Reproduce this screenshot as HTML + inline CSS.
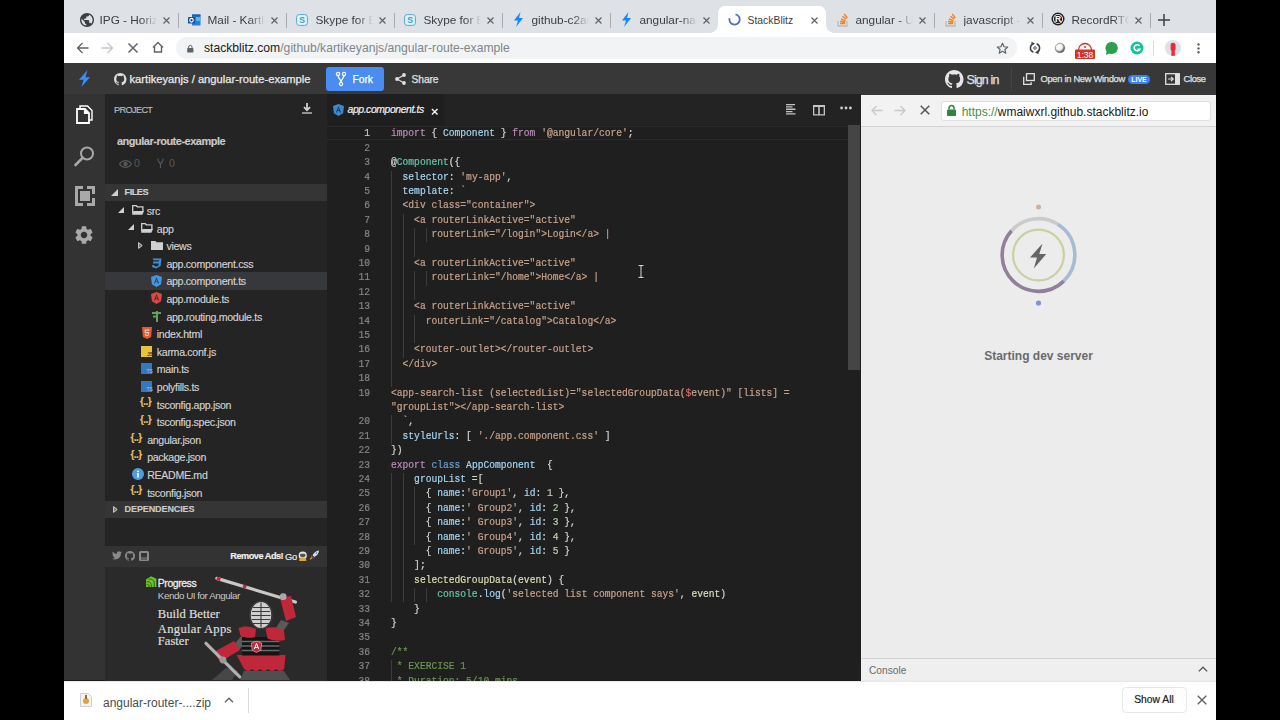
<!DOCTYPE html>
<html><head><meta charset="utf-8"><title>StackBlitz</title>
<style>
*{margin:0;padding:0;box-sizing:border-box}
html,body{width:1280px;height:720px;overflow:hidden;background:#000;font-family:"Liberation Sans",sans-serif}
#scr{position:absolute;left:64px;top:0;width:1152px;height:720px;overflow:hidden;background:#1e1e1e}
.a{position:absolute}
svg{position:absolute;overflow:visible}
#tabs{left:0;top:0;width:1152px;height:33px;background:#dee1e6}
.tab{position:absolute;top:6px;width:108px;height:27px;font-size:11.8px;color:#3c4043}
.tab.act{background:#fff;border-radius:7px 7px 0 0}
.tab.act:before,.tab.act:after{content:"";position:absolute;bottom:0;width:8px;height:8px;background:radial-gradient(circle at 0 0,transparent 7.5px,#fff 8px)}
.tab.act:before{left:-8px;background:radial-gradient(circle at 0 0,transparent 7.5px,#fff 8px)}
.tab.act:after{right:-8px;background:radial-gradient(circle at 100% 0,transparent 7.5px,#fff 8px)}
.tab .tt{position:absolute;left:29.5px;top:6.8px;width:57px;white-space:nowrap;overflow:hidden;-webkit-mask-image:linear-gradient(90deg,#000 72%,transparent 100%)}
.tab.act .tt{width:auto;-webkit-mask-image:none;font-size:10.3px;top:9.4px;letter-spacing:0.05px}
.tab .x{position:absolute;left:93px;top:10.5px;width:7px;height:7px}
.tsep{position:absolute;top:13px;width:1px;height:15px;background:#a8abb0}
#addr{left:0;top:33px;width:1152px;height:30px;background:#fff}
#omni{left:112px;top:37px;width:841px;height:22px;border-radius:11px;background:#f1f3f4}
#url{left:140px;top:41.3px;font-size:12.15px;color:#202124;white-space:nowrap;letter-spacing:0px}
#url span{color:#80868b}

#sbh{left:0;top:63px;width:1152px;height:31.5px;background:#383838}
.ht{position:absolute;color:#e0e0e0;white-space:nowrap}
#fork{left:262px;top:67px;width:57.5px;height:24px;background:#4a8cf0;border-radius:3px}

#act{left:0;top:94px;width:41px;height:586px;background:#333}

#side{left:41px;top:94px;width:222px;height:586px;background:#242424}
.st{position:absolute;white-space:nowrap;color:#d2d2d2;font-size:10.6px;letter-spacing:-0.3px;-webkit-text-stroke:0.15px}
.band{position:absolute;left:41px;width:222px;background:#333}

#edit{left:263px;top:94px;width:534px;height:586px;background:#1f1f1f}
#etabs{left:263px;top:94px;width:534px;height:31px;background:#232323}
#atab{left:263px;top:94px;width:118px;height:31px;background:#1f1f1f}
.cl{position:absolute;left:263px;width:520px;height:14.4px;font-family:"Liberation Mono",monospace;font-size:9.65px;line-height:14.4px;white-space:pre;color:#d4d4d4;transform:scaleY(1.15);-webkit-text-stroke:0.2px}
.ln{position:absolute;left:0;width:43px;text-align:right;color:#858585}
.cd{position:absolute;left:64px}
.k{color:#bb8ab8}.v{color:#a3d2ee}.s{color:#c6a08a}.t{color:#62c2a6}.b{color:#6a9ed0}.n{color:#b9cdb0}.f{color:#d9d9b0}.c{color:#6d9158}.r{color:#d16969}.e{color:#dadcbc}
.g{position:absolute;width:1px;background:#3c3c3c}

#prev{left:796.5px;top:94.5px;width:356px;height:586px;background:#ececec}
</style></head><body>
<div id="scr">
<div id="tabs" class="a">
<div class="tab" style="left:6px"><svg style="left:9.5px;top:7px" width="14" height="14" viewBox="2 2 20 20"><path d="M12 2C6.48 2 2 6.48 2 12s4.48 10 10 10 10-4.48 10-10S17.52 2 12 2zm-1 17.93c-3.95-.49-7-3.85-7-7.93 0-.62.08-1.21.21-1.790L9 15v1c0 1.1.9 2 2 2v1.93zm6.9-2.54c-.26-.81-1-1.390-1.9-1.39h-1v-3c0-.55-.45-1-1-1H8v-2h2c.55 0 1-.45 1-1V7h2c1.1 0 2-.9 2-2v-.41c2.93 1.19 5 4.06 5 7.41 0 2.08-.8 3.97-2.1 5.39z" fill="#3c4043"/></svg><span class="tt">IPG - Horizon</span><span class="x"><svg width="7" height="7" viewBox="0 0 7 7"><path d="M0.5 0.5L6.5 6.5M6.5 0.5L0.5 6.5" stroke="#5f6368" stroke-width="1.2" fill="none"/></svg></span></div>
<div class="tab" style="left:114px"><svg style="left:9.5px;top:7.5px" width="13" height="12" viewBox="0 0 13 12"><rect x="4" y="0.5" width="8.5" height="11" rx="0.6" fill="#2a7fd4"/><rect x="4" y="0.5" width="8.5" height="2" fill="#1d5fa8"/><rect x="8" y="3" width="4.5" height="4" fill="#56b8f0"/><rect x="0" y="3" width="7" height="6.5" rx="0.6" fill="#1d4fa0"/><ellipse cx="3.5" cy="6.25" rx="1.7" ry="1.9" fill="none" stroke="#fff" stroke-width="1.1"/></svg><span class="tt">Mail - Karthikeyan</span><span class="x"><svg width="7" height="7" viewBox="0 0 7 7"><path d="M0.5 0.5L6.5 6.5M6.5 0.5L0.5 6.5" stroke="#5f6368" stroke-width="1.2" fill="none"/></svg></span></div>
<div class="tab" style="left:222px"><svg style="left:10px;top:7.5px" width="12" height="12" viewBox="0 0 12 12"><path d="M3.2 0.6h5.6a2.6 2.6 0 0 1 2.6 2.6v5.6a2.6 2.6 0 0 1-2.6 2.6H3.2a2.6 2.6 0 0 1-2.6-2.6V3.2a2.6 2.6 0 0 1 2.6-2.6z" fill="#dff4fb" stroke="#5aa7c8" stroke-width="1"/><text x="6" y="9.3" font-family="Liberation Sans" font-size="8.6" font-weight="bold" fill="#3b9cc4" text-anchor="middle">S</text></svg><span class="tt">Skype for Business</span><span class="x"><svg width="7" height="7" viewBox="0 0 7 7"><path d="M0.5 0.5L6.5 6.5M6.5 0.5L0.5 6.5" stroke="#5f6368" stroke-width="1.2" fill="none"/></svg></span></div>
<div class="tab" style="left:330px"><svg style="left:10px;top:7.5px" width="12" height="12" viewBox="0 0 12 12"><path d="M3.2 0.6h5.6a2.6 2.6 0 0 1 2.6 2.6v5.6a2.6 2.6 0 0 1-2.6 2.6H3.2a2.6 2.6 0 0 1-2.6-2.6V3.2a2.6 2.6 0 0 1 2.6-2.6z" fill="#dff4fb" stroke="#5aa7c8" stroke-width="1"/><text x="6" y="9.3" font-family="Liberation Sans" font-size="8.6" font-weight="bold" fill="#3b9cc4" text-anchor="middle">S</text></svg><span class="tt">Skype for Business</span><span class="x"><svg width="7" height="7" viewBox="0 0 7 7"><path d="M0.5 0.5L6.5 6.5M6.5 0.5L0.5 6.5" stroke="#5f6368" stroke-width="1.2" fill="none"/></svg></span></div>
<div class="tab" style="left:438px"><svg style="left:11px;top:6px" width="11" height="15" viewBox="0 0 11 15"><path d="M7.5 0L1 8.5h4L3 15l7-9H6z" fill="#1389fd"/></svg><span class="tt">github-c2am</span><span class="x"><svg width="7" height="7" viewBox="0 0 7 7"><path d="M0.5 0.5L6.5 6.5M6.5 0.5L0.5 6.5" stroke="#5f6368" stroke-width="1.2" fill="none"/></svg></span></div>
<div class="tab" style="left:546px"><svg style="left:11px;top:6px" width="11" height="15" viewBox="0 0 11 15"><path d="M7.5 0L1 8.5h4L3 15l7-9H6z" fill="#1389fd"/></svg><span class="tt">angular-navigation</span><span class="x"><svg width="7" height="7" viewBox="0 0 7 7"><path d="M0.5 0.5L6.5 6.5M6.5 0.5L0.5 6.5" stroke="#5f6368" stroke-width="1.2" fill="none"/></svg></span></div>
<div class="tab act" style="left:654px"><svg style="left:10px;top:7px" width="13" height="13" viewBox="0 0 13 13"><path d="M7.5 1.3A5.2 5.2 0 1 1 1.5 5.2" fill="none" stroke="#4c6fc4" stroke-width="1.8"/></svg><span class="tt">StackBlitz</span><span class="x"><svg width="7" height="7" viewBox="0 0 7 7"><path d="M0.5 0.5L6.5 6.5M6.5 0.5L0.5 6.5" stroke="#5f6368" stroke-width="1.2" fill="none"/></svg></span></div>
<div class="tab" style="left:762px"><svg style="left:10px;top:6px" width="13" height="15" viewBox="0 0 13 15"><path d="M2 9v5h9V9" fill="none" stroke="#bcbbbb" stroke-width="1.3"/><path d="M4 11.5h5M4.2 9.3l4.9 1M5 6.8l4.5 2.1M6.4 4.2l3.9 3.1M8.3 2l2.9 4" stroke="#f48024" stroke-width="1.4"/></svg><span class="tt">angular - Update</span><span class="x"><svg width="7" height="7" viewBox="0 0 7 7"><path d="M0.5 0.5L6.5 6.5M6.5 0.5L0.5 6.5" stroke="#5f6368" stroke-width="1.2" fill="none"/></svg></span></div>
<div class="tab" style="left:870px"><svg style="left:10px;top:6px" width="13" height="15" viewBox="0 0 13 15"><path d="M2 9v5h9V9" fill="none" stroke="#bcbbbb" stroke-width="1.3"/><path d="M4 11.5h5M4.2 9.3l4.9 1M5 6.8l4.5 2.1M6.4 4.2l3.9 3.1M8.3 2l2.9 4" stroke="#f48024" stroke-width="1.4"/></svg><span class="tt">javascript - What</span><span class="x"><svg width="7" height="7" viewBox="0 0 7 7"><path d="M0.5 0.5L6.5 6.5M6.5 0.5L0.5 6.5" stroke="#5f6368" stroke-width="1.2" fill="none"/></svg></span></div>
<div class="tab" style="left:978px"><svg style="left:9px;top:6px" width="14" height="14" viewBox="0 0 14 14"><circle cx="7" cy="7" r="6.5" fill="#222"/><circle cx="7" cy="7" r="5" fill="#fff"/><circle cx="7" cy="7" r="4.2" fill="#222"/><text x="7" y="10.2" font-family="Liberation Sans" font-size="8.5" font-weight="bold" fill="#fff" text-anchor="middle">R</text></svg><span class="tt">RecordRTC | WebRTC</span><span class="x"><svg width="7" height="7" viewBox="0 0 7 7"><path d="M0.5 0.5L6.5 6.5M6.5 0.5L0.5 6.5" stroke="#5f6368" stroke-width="1.2" fill="none"/></svg></span></div>
<div class="tsep" style="left:114px"></div>
<div class="tsep" style="left:222px"></div>
<div class="tsep" style="left:330px"></div>
<div class="tsep" style="left:438px"></div>
<div class="tsep" style="left:546px"></div>
<div class="tsep" style="left:870px"></div>
<div class="tsep" style="left:978px"></div>
<div class="tsep" style="left:1086px"></div>
<svg style="left:1094px;top:14px" width="12" height="12" viewBox="0 0 12 12"><path d="M6 0v12M0 6h12" stroke="#3c4043" stroke-width="1.5"/></svg>
</div>
<div id="addr" class="a"></div>
<div id="omni" class="a"></div>
<svg style="left:12px;top:42px" width="13" height="12" viewBox="0 0 13 12"><path d="M12.5 6H1.5M6.5 1L1.5 6l5 5" fill="none" stroke="#5f6368" stroke-width="1.3"/></svg>
<svg style="left:37px;top:42px" width="13" height="12" viewBox="0 0 13 12"><path d="M0.5 6h11M6.5 1l5 5-5 5" fill="none" stroke="#c4c7cb" stroke-width="1.3"/></svg>
<svg style="left:64px;top:43px" width="10" height="10" viewBox="0 0 10 10"><path d="M0.5 0.5l9 9M9.5 0.5l-9 9" fill="none" stroke="#5f6368" stroke-width="1.5"/></svg>
<svg style="left:88px;top:41px" width="12" height="12" viewBox="0 0 12 12"><path d="M1 6.5L6 1.5l5 5M2.5 5v6h7V5" fill="none" stroke="#5f6368" stroke-width="1.4"/></svg>
<svg style="left:123.3px;top:44.6px" width="6.6" height="7.6" viewBox="0 0 9 11"><rect x="0" y="4.5" width="9" height="6.5" rx="1" fill="#5f6368"/><path d="M2 4.5V3a2.5 2.5 0 0 1 5 0v1.5" fill="none" stroke="#5f6368" stroke-width="1.4"/></svg>
<div id="url" class="a">stackblitz.com<span>/github/kartikeyanjs/angular-route-example</span></div>
<svg style="left:932px;top:42px" width="13" height="13" viewBox="0 0 24 24"><path d="M12 2.5l2.9 6.3 6.8.6-5.2 4.5 1.6 6.7L12 17l-6.1 3.6 1.6-6.7L2.3 9.4l6.8-.6z" fill="none" stroke="#5f6368" stroke-width="2.2" stroke-linejoin="round"/></svg>
<svg style="left:964.5px;top:41.5px" width="12" height="12" viewBox="0 0 12 12"><path d="M4.6 1.6A4.6 4.6 0 0 0 4.4 10.3M7.4 10.4A4.6 4.6 0 0 0 7.6 1.7" fill="none" stroke="#3c4043" stroke-width="1.5"/><path d="M2.4 -0.2L6 1.6 2.6 3.6z M9.6 12.2L6 10.4 9.4 8.4z" fill="#3c4043"/><circle cx="6" cy="6" r="1.3" fill="none" stroke="#3c4043" stroke-width="0.9"/></svg>
<svg style="left:991px;top:43px" width="10" height="10" viewBox="0 0 10 10"><defs><radialGradient id="sph" cx="0.4" cy="0.38" r="0.62"><stop offset="0" stop-color="#fff"/><stop offset="0.55" stop-color="#eee"/><stop offset="0.8" stop-color="#888"/><stop offset="1" stop-color="#444"/></radialGradient></defs><circle cx="5" cy="5" r="4.8" fill="url(#sph)" stroke="#777" stroke-width="0.6"/></svg>
<svg style="left:1010px;top:39px" width="22" height="21" viewBox="0 0 22 21"><path d="M4.5 11a6.5 6.5 0 0 1 13 0" fill="none" stroke="#d93025" stroke-width="1.3"/><circle cx="11" cy="8" r="1" fill="#d93025"/><rect x="1" y="10.5" width="20" height="9.5" rx="1" fill="#d93025"/><text x="11" y="18.6" font-family="Liberation Sans" font-size="8.6" fill="#fff" text-anchor="middle">1:38</text></svg>
<svg style="left:1040px;top:41px" width="15" height="15" viewBox="0 0 15 15"><path d="M7.5 1a6 6 0 0 0-5 9.3L2 14l3.3-1.6A6 6 0 1 0 7.5 1z" fill="#2e9e4f"/></svg>
<svg style="left:1066px;top:41px" width="14" height="14" viewBox="0 0 14 14"><circle cx="7" cy="7" r="6.5" fill="#15c39a"/><path d="M9.6 5A3 3 0 1 0 9.8 8.3H7.5" fill="none" stroke="#fff" stroke-width="1.6"/></svg>
<div class="a" style="left:1089px;top:41px;width:1px;height:15px;background:#dadce0"></div>
<svg style="left:1100.5px;top:39.7px" width="16" height="16" viewBox="0 0 16 16"><circle cx="8" cy="8" r="8" fill="#dfe1e3"/><path d="M5.6 5.2c0-1.6 1-2.4 2.4-2.4s2.6.8 2.6 2.4v3.6c0 1-.5 1.8-1 2.3l.4 4.6H6.3l.3-4.6c-.6-.6-1-1.3-1-2.5z" fill="#e8283f"/></svg>
<svg style="left:1133px;top:42.5px" width="3" height="11" viewBox="0 0 3 11"><circle cx="1.5" cy="1.5" r="1.2" fill="#5f6368"/><circle cx="1.5" cy="5.4" r="1.2" fill="#5f6368"/><circle cx="1.5" cy="9.3" r="1.2" fill="#5f6368"/></svg>
<div id="sbh" class="a"></div>
<svg style="left:14.5px;top:70px" width="11" height="17" viewBox="0 0 11 17"><path d="M8.5 0L0 9.8h4.6L2.4 17 11 7.2H6.4z" fill="#3a8ef5"/></svg>
<svg style="left:50px;top:73px" width="12.5" height="12.5" viewBox="0 0 16 16"><path d="M8 0C3.58 0 0 3.58 0 8c0 3.54 2.29 6.53 5.47 7.59.4.07.55-.17.55-.38 0-.19-.01-.82-.01-1.49-2.01.37-2.53-.49-2.69-.94-.09-.23-.48-.94-.82-1.13-.28-.15-.68-.52-.01-.53.63-.01 1.08.58 1.23.82.72 1.21 1.87.87 2.33.66.07-.52.28-.87.51-1.07-1.78-.2-3.64-.89-3.64-3.95 0-.87.31-1.59.82-2.15-.08-.2-.36-1.02.08-2.12 0 0 .67-.21 2.2.82.64-.18 1.32-.27 2-.27.68 0 1.36.09 2 .27 1.53-1.04 2.2-.82 2.2-.82.44 1.1.16 1.92.08 2.12.51.56.82 1.27.82 2.15 0 3.07-1.87 3.75-3.65 3.95.29.25.54.73.54 1.48 0 1.07-.01 1.93-.01 2.2 0 .21.15.46.55.38A8.013 8.013 0 0 0 16 8c0-4.42-3.58-8-8-8z" fill="#dcdcdc"/></svg>
<div class="ht" style="left:65.5px;top:73px;font-size:11.2px;letter-spacing:0px;color:#eaeaea;-webkit-text-stroke:0.25px">kartikeyanjs / angular-route-example</div>
<div id="fork" class="a"></div>
<svg style="left:272px;top:72px" width="10" height="14" viewBox="0 0 10 14"><circle cx="2" cy="2" r="1.6" fill="none" stroke="#fff" stroke-width="1.3"/><circle cx="8" cy="2" r="1.6" fill="none" stroke="#fff" stroke-width="1.3"/><circle cx="5" cy="12" r="1.6" fill="none" stroke="#fff" stroke-width="1.3"/><path d="M2 3.6C2 6.5 5 7 5 10.4M8 3.6C8 6.5 5 7 5 10.4" fill="none" stroke="#fff" stroke-width="1.3"/></svg>
<div class="ht" style="left:288.5px;top:73.5px;font-size:10.4px;color:#fff;letter-spacing:-0.1px;-webkit-text-stroke:0.25px">Fork</div>
<svg style="left:331px;top:73px" width="11" height="12" viewBox="0 0 11 12"><circle cx="2" cy="6" r="1.9" fill="#e0e0e0"/><circle cx="9" cy="2" r="1.9" fill="#e0e0e0"/><circle cx="9" cy="10" r="1.9" fill="#e0e0e0"/><path d="M2 6L9 2M2 6l7 4" stroke="#e0e0e0" stroke-width="1.2"/></svg>
<div class="ht" style="left:347.5px;top:73.5px;font-size:10.3px;letter-spacing:-0.1px;-webkit-text-stroke:0.25px">Share</div>
<svg style="left:881px;top:70px" width="18.5" height="18.5" viewBox="0 0 16 16"><path d="M8 0C3.58 0 0 3.58 0 8c0 3.54 2.29 6.53 5.47 7.59.4.07.55-.17.55-.38 0-.19-.01-.82-.01-1.49-2.01.37-2.53-.49-2.69-.94-.09-.23-.48-.94-.82-1.13-.28-.15-.68-.52-.01-.53.63-.01 1.08.58 1.23.82.72 1.21 1.87.87 2.33.66.07-.52.28-.87.51-1.07-1.78-.2-3.64-.89-3.64-3.95 0-.87.31-1.59.82-2.15-.08-.2-.36-1.02.08-2.12 0 0 .67-.21 2.2.82.64-.18 1.32-.27 2-.27.68 0 1.36.09 2 .27 1.53-1.04 2.2-.82 2.2-.82.44 1.1.16 1.92.08 2.12.51.56.82 1.27.82 2.15 0 3.07-1.87 3.75-3.65 3.95.29.25.54.73.54 1.48 0 1.07-.01 1.93-.01 2.2 0 .21.15.46.55.38A8.013 8.013 0 0 0 16 8c0-4.42-3.58-8-8-8z" fill="#e6e6e6"/></svg>
<div class="ht" style="left:902.5px;top:72.7px;font-size:12.4px;letter-spacing:-0.85px;-webkit-text-stroke:0.25px">Sign in</div>
<div class="a" style="left:947px;top:67px;width:1px;height:24px;background:#444"></div>
<svg style="left:959px;top:73px" width="12" height="12" viewBox="0 0 12 12"><rect x="3.5" y="0.7" width="7.8" height="6.8" fill="none" stroke="#e0e0e0" stroke-width="1.3"/><path d="M0.7 3.8v7.5h7.5v-2" fill="none" stroke="#e0e0e0" stroke-width="1.3"/></svg>
<div class="ht" style="left:976.5px;top:73px;font-size:9.4px;letter-spacing:-0.32px;-webkit-text-stroke:0.25px">Open in New Window</div>
<div class="a" style="left:1064px;top:75px;width:22px;height:9px;border-radius:5px;background:#3b82f6;color:#fff;font-size:7px;font-weight:bold;text-align:center;line-height:9px">LIVE</div>
<svg style="left:1101px;top:73px" width="15" height="12" viewBox="0 0 15 12"><rect x="0.7" y="0.7" width="13.6" height="10.6" fill="none" stroke="#e0e0e0" stroke-width="1.3"/><rect x="10" y="0.7" width="4.3" height="10.6" fill="#e0e0e0"/><path d="M3 6h5M6 3.8L8.2 6 6 8.2" fill="none" stroke="#e0e0e0" stroke-width="1.2"/></svg>
<div class="ht" style="left:1119.5px;top:73px;font-size:9.4px;letter-spacing:-0.35px;-webkit-text-stroke:0.25px">Close</div>
<div id="act" class="a"></div>
<svg style="left:12px;top:105px" width="17" height="19" viewBox="0 0 17 19"><path d="M4 3.5V1h7.5l4.5 4.5V15h-2.5" fill="none" stroke="#fff" stroke-width="1.4"/><path d="M1 4h8l4 4v10H1z" fill="none" stroke="#fff" stroke-width="1.8"/><path d="M8.5 4v4.5H13" fill="#fff" stroke="#fff" stroke-width="1.2"/></svg>
<svg style="left:10px;top:146px" width="21" height="20" viewBox="0 0 21 20"><circle cx="13" cy="7.5" r="6" fill="none" stroke="#a9a9a9" stroke-width="2"/><path d="M8.8 11.7L1.5 19" stroke="#a9a9a9" stroke-width="2.6" stroke-linecap="round"/></svg>
<svg style="left:11px;top:186px" width="20" height="20" viewBox="0 0 20 20"><path d="M0 0h8v3H3v14h5v3H0zM12 0h8v8h-3V3h-5zM12 20h8v-8h-3v5h-5z" fill="#a9a9a9"/><rect x="5" y="5" width="10" height="10" fill="#a9a9a9"/></svg>
<svg style="left:9px;top:223.5px" width="22" height="22" viewBox="0 0 24 24"><path d="M19.14 12.94c.04-.3.06-.61.06-.94 0-.32-.02-.64-.07-.94l2.03-1.58a.49.49 0 0 0 .12-.61l-1.92-3.32a.488.488 0 0 0-.59-.22l-2.39.96c-.5-.38-1.03-.7-1.62-.94l-.36-2.54a.484.484 0 0 0-.48-.41h-3.84c-.24 0-.43.17-.47.41l-.36 2.54c-.59.24-1.13.57-1.62.94l-2.39-.96a.48.48 0 0 0-.59.22L2.74 8.87c-.12.21-.08.47.12.61l2.03 1.58c-.05.3-.09.63-.09.94s.02.64.07.94l-2.03 1.58a.49.49 0 0 0-.12.61l1.92 3.32c.12.22.37.29.59.22l2.39-.96c.5.38 1.03.7 1.62.94l.36 2.54c.05.24.24.41.48.41h3.84c.24 0 .44-.17.47-.41l.36-2.54c.59-.24 1.13-.56 1.62-.94l2.39.96c.22.08.47 0 .59-.22l1.92-3.32c.12-.22.07-.47-.12-.61l-2.01-1.58zM12 15.6c-1.98 0-3.6-1.62-3.6-3.6s1.62-3.6 3.6-3.6 3.6 1.62 3.6 3.6-1.62 3.6-3.6 3.6z" fill="#a9a9a9"/></svg>
<div id="side" class="a"></div>
<div class="st" style="left:50px;top:104.6px;font-size:9.2px;color:#bdbdbd;letter-spacing:-0.65px">PROJECT</div>
<svg style="left:238px;top:103px" width="10" height="11" viewBox="0 0 10 11"><path d="M5 0v7M2 4.2L5 7.2 8 4.2" fill="none" stroke="#cfcfcf" stroke-width="1.8"/><path d="M0 10h10" stroke="#cfcfcf" stroke-width="1.3"/></svg>
<div class="st" style="left:53px;top:135.3px;font-size:11px;font-weight:bold;color:#c8c8c8;letter-spacing:-0.5px">angular-route-example</div>
<svg style="left:54.5px;top:160px" width="13" height="8" viewBox="0 0 13 8"><path d="M0.6 4C2 1.7 4 .6 6.5.6S11 1.7 12.4 4C11 6.3 9 7.4 6.5 7.4S2 6.3.6 4z" fill="none" stroke="#555" stroke-width="1.4"/><circle cx="6.5" cy="4" r="2.2" fill="#555"/></svg>
<div class="st" style="left:70px;top:157px;color:#555;font-size:10.5px">0</div>
<svg style="left:93px;top:158px" width="7" height="10" viewBox="0 0 7 10"><path d="M1 0.5v1.5c0 2 2.5 2.5 2.5 4.5v3.5M6 0.5v1.5c0 2-2.5 2.5-2.5 4.5" fill="none" stroke="#555" stroke-width="1.2"/></svg>
<div class="st" style="left:105px;top:157px;color:#555;font-size:10.5px">0</div>
<div class="band" style="top:183.9px;height:17.4px;background:#353535"></div>
<svg style="left:47px;top:188.6px" width="7" height="7" viewBox="0 0 7 7"><path d="M7 0v7H0z" fill="#d0d0d0"/></svg>
<div class="st" style="left:60.6px;top:186.6px;font-size:9.2px;font-weight:bold;color:#cfcfcf;letter-spacing:-0.5px">FILES</div>
<div class="band" style="top:271.9px;height:17.8px;background:#37383c"></div>
<svg style="left:54px;top:206.7px" width="6" height="6" viewBox="0 0 6 6"><path d="M6 0v6H0z" fill="#cfcfcf"/></svg>
<svg style="left:67.5px;top:204.9px" width="12" height="10" viewBox="0 0 12 10"><path d="M0.7 8.5V0.7h3.6l1 1.1h5.6v4.4" fill="none" stroke="#d0d0d0" stroke-width="1.3"/><path d="M0 9.7L1.6 6h10.4L10.4 9.7z" fill="#d0d0d0"/></svg>
<div class="st" style="left:82.8px;top:205.0px">src</div>
<svg style="left:64px;top:224.3px" width="6" height="6" viewBox="0 0 6 6"><path d="M6 0v6H0z" fill="#cfcfcf"/></svg>
<svg style="left:77px;top:222.5px" width="12" height="10" viewBox="0 0 12 10"><path d="M0.7 8.5V0.7h3.6l1 1.1h5.6v4.4" fill="none" stroke="#d0d0d0" stroke-width="1.3"/><path d="M0 9.7L1.6 6h10.4L10.4 9.7z" fill="#d0d0d0"/></svg>
<div class="st" style="left:92.8px;top:222.6px">app</div>
<svg style="left:74px;top:241.9px" width="5" height="7" viewBox="0 0 5 7"><path d="M0.6 0.6L4.2 3.5 0.6 6.4z" fill="#777" stroke="#cfcfcf" stroke-width="1"/></svg>
<svg style="left:86.6px;top:239.9px" width="12" height="10" viewBox="0 0 12 10"><path d="M0 1h4.4l1 1.3H12V10H0z" fill="#d0d0d0"/></svg>
<div class="st" style="left:102.4px;top:240.2px">views</div>
<svg style="left:86.5px;top:257.5px" width="11" height="11" viewBox="0 0 11 11"><path d="M1.5 0.5h9L9.6 8 5 10.5 1 9l.4-2h2l-.2 1 1.8.6 2.4-.8.4-2.3H1.9l.4-2h5.6l.3-1.3H2.6z" fill="#3d8fd6"/></svg>
<div class="st" style="left:102.4px;top:257.8px">app.component.css</div>
<svg style="left:86.5px;top:274.6px" width="11" height="12" viewBox="0 0 11 12"><path d="M5.5 0L11 2l-.9 7.2L5.5 12 .9 9.2 0 2z" fill="#4a96db"/><path d="M5.5 2L2.8 8.6h1.2l.5-1.4h2l.5 1.4h1.2zM4.9 6.2l.6-1.8.6 1.8z" fill="#1e4e80"/></svg>
<div class="st" style="left:102.4px;top:275.4px">app.component.ts</div>
<svg style="left:86.5px;top:292.2px" width="11" height="12" viewBox="0 0 11 12"><path d="M5.5 0L11 2l-.9 7.2L5.5 12 .9 9.2 0 2z" fill="#d84a4a"/><path d="M5.5 2L2.8 8.6h1.2l.5-1.4h2l.5 1.4h1.2zM4.9 6.2l.6-1.8.6 1.8z" fill="#7a1d1d"/></svg>
<div class="st" style="left:102.4px;top:293.0px">app.module.ts</div>
<svg style="left:86.5px;top:309.8px" width="11" height="12" viewBox="0 0 11 12"><path d="M1 2h9v2H1zM5 1h2v11H5zM2 5.5h5v2H2z" fill="#5aa55a"/></svg>
<div class="st" style="left:102.4px;top:310.6px">app.routing.module.ts</div>
<svg style="left:78px;top:327.4px" width="10" height="12" viewBox="0 0 10 12"><path d="M0 0h10l-.9 10L5 12 .9 10z" fill="#e15b32"/><path d="M2.5 2.5h5l-.2 1.2H3.8l.1 1.3h3.3l-.4 3.5L5 9.2 3 8.5l-.1-1.4h1.1l.1.6 1 .3 1-.3.1-1.4H2.8z" fill="#f5c6b5"/></svg>
<div class="st" style="left:92.8px;top:328.2px">index.html</div>
<svg style="left:77px;top:345.5px" width="11" height="11" viewBox="0 0 11 11"><rect width="11" height="11" fill="#e8c43a"/><text x="6" y="9.5" font-family="Liberation Sans" font-size="5" font-weight="bold" fill="#333">JS</text></svg>
<div class="st" style="left:92.8px;top:345.8px">karma.conf.js</div>
<svg style="left:77px;top:363.1px" width="11" height="11" viewBox="0 0 11 11"><rect width="11" height="11" fill="#3479c0"/><text x="5.5" y="9.5" font-family="Liberation Sans" font-size="5" fill="#a9c8e8">TS</text></svg>
<div class="st" style="left:92.8px;top:363.4px">main.ts</div>
<svg style="left:77px;top:380.7px" width="11" height="11" viewBox="0 0 11 11"><rect width="11" height="11" fill="#3479c0"/><text x="5.5" y="9.5" font-family="Liberation Sans" font-size="5" fill="#a9c8e8">TS</text></svg>
<div class="st" style="left:92.8px;top:381.0px">polyfills.ts</div>
<div class="st" style="left:76px;top:396.3px;color:#e5c06b;font-size:10px;font-weight:bold;letter-spacing:-0.6px">{..}</div>
<div class="st" style="left:92.8px;top:398.6px">tsconfig.app.json</div>
<div class="st" style="left:76px;top:413.9px;color:#e5c06b;font-size:10px;font-weight:bold;letter-spacing:-0.6px">{..}</div>
<div class="st" style="left:92.8px;top:416.2px">tsconfig.spec.json</div>
<div class="st" style="left:66.5px;top:431.5px;color:#e5c06b;font-size:10px;font-weight:bold;letter-spacing:-0.6px">{..}</div>
<div class="st" style="left:83.2px;top:433.8px">angular.json</div>
<div class="st" style="left:66.5px;top:449.1px;color:#e5c06b;font-size:10px;font-weight:bold;letter-spacing:-0.6px">{..}</div>
<div class="st" style="left:83.2px;top:451.4px">package.json</div>
<svg style="left:67.5px;top:468.2px" width="12" height="12" viewBox="0 0 12 12"><circle cx="6" cy="6" r="6" fill="#4f9de0"/><rect x="5.2" y="5" width="1.6" height="4.5" fill="#fff"/><circle cx="6" cy="3.3" r="0.9" fill="#fff"/></svg>
<div class="st" style="left:83.2px;top:469.0px">README.md</div>
<div class="st" style="left:66.5px;top:484.3px;color:#e5c06b;font-size:10px;font-weight:bold;letter-spacing:-0.6px">{..}</div>
<div class="st" style="left:83.2px;top:486.6px">tsconfig.json</div>
<div class="band" style="top:500.7px;height:17.4px;background:#353535"></div>
<svg style="left:49px;top:505.9px" width="5" height="7" viewBox="0 0 5 7"><path d="M0.6 0.6L4.2 3.5 0.6 6.4z" fill="#777" stroke="#cfcfcf" stroke-width="1"/></svg>
<div class="st" style="left:60.6px;top:504.4px;font-size:9px;font-weight:bold;color:#c8c8c8;letter-spacing:-0.1px">DEPENDENCIES</div>
<div class="a" style="left:41px;top:545.5px;width:222px;height:21px;background:#333"></div>
<div class="a" style="left:41px;top:566.5px;width:222px;height:114px;background:#2a2a2a"></div>
<svg style="left:47.5px;top:551px" width="10" height="9" viewBox="0 0 24 20"><path d="M24 2.4c-.9.4-1.8.6-2.8.8 1-.6 1.8-1.6 2.2-2.7-1 .6-2 1-3.1 1.2C19.3.7 18 0 16.6 0c-2.7 0-4.9 2.2-4.9 4.9 0 .4 0 .8.1 1.1C7.7 5.8 4.1 3.9 1.7.9c-.5.7-.7 1.6-.7 2.5 0 1.7.9 3.2 2.2 4.1-.8 0-1.6-.2-2.2-.6v.1c0 2.4 1.7 4.4 3.9 4.8-.4.1-.8.2-1.3.2-.3 0-.6 0-.9-.1.6 2 2.4 3.4 4.6 3.4-1.7 1.3-3.8 2.1-6.1 2.1-.4 0-.8 0-1.2-.1 2.2 1.4 4.8 2.2 7.5 2.2 9.1 0 14-7.5 14-14v-.6c1-.7 1.8-1.6 2.5-2.5z" fill="#8a8a8a"/></svg>
<svg style="left:61px;top:551px" width="10" height="10" viewBox="0 0 16 16"><path d="M8 0C3.58 0 0 3.58 0 8c0 3.54 2.29 6.53 5.47 7.59.4.07.55-.17.55-.38 0-.19-.01-.82-.01-1.49-2.01.37-2.53-.49-2.69-.94-.09-.23-.48-.94-.82-1.13-.28-.15-.68-.52-.01-.53.63-.01 1.08.58 1.23.82.72 1.21 1.87.87 2.33.66.07-.52.28-.87.51-1.07-1.78-.2-3.64-.89-3.64-3.95 0-.87.31-1.59.82-2.15-.08-.2-.36-1.02.08-2.12 0 0 .67-.21 2.2.82.64-.18 1.32-.27 2-.27.68 0 1.36.09 2 .27 1.53-1.04 2.2-.82 2.2-.82.44 1.1.16 1.92.08 2.12.51.56.82 1.27.82 2.15 0 3.07-1.87 3.75-3.65 3.95.29.25.54.73.54 1.48 0 1.07-.01 1.93-.01 2.2 0 .21.15.46.55.38A8.013 8.013 0 0 0 16 8c0-4.42-3.58-8-8-8z" fill="#8a8a8a"/></svg>
<svg style="left:74.5px;top:551px" width="10" height="10" viewBox="0 0 10 10"><rect x="0" y="0" width="10" height="10" rx="1.5" fill="#8a8a8a"/><rect x="2" y="2" width="6" height="4.5" fill="#333"/><path d="M2 8h6" stroke="#333" stroke-width="1"/></svg>
<div class="st" style="left:166.3px;top:550.5px;font-size:9.2px;font-weight:bold;color:#f0f0f0;letter-spacing:-0.5px">Remove Ads!</div>
<div class="st" style="left:221px;top:550.5px;font-size:9.4px;color:#f0f0f0;letter-spacing:-0.3px">Go</div>
<svg style="left:234.3px;top:550.5px" width="9.5" height="10" viewBox="0 0 10 11"><circle cx="5" cy="5" r="4.5" fill="#e6e6e6"/><rect x="2" y="3" width="6" height="3.5" rx="1.5" fill="#555"/><path d="M1 11c0-3 2-4 4-4s4 1 4 4z" fill="#d9a441"/></svg>
<svg style="left:246.3px;top:550px" width="9.5" height="9.5" viewBox="0 0 11 11"><path d="M10.5 0.5C7 .8 4.5 3 3 6l2 2c3-1.5 5.2-4 5.5-7.5z" fill="#ddd"/><circle cx="7.5" cy="3.5" r="1" fill="#4a90d9"/><path d="M3 6L0.5 7 2 8.5zM5 8L4 10.5 2.5 9z" fill="#d33"/><path d="M2.5 8.5L.2 10.8" stroke="#f5a623" stroke-width="1.4"/></svg>
<svg style="left:41px;top:567px" width="221" height="113" viewBox="105 567 221 113">
<path d="M146 579.5l5-3.3 5.4 2.6v8.2H146z" fill="#6cc22a"/>
<path d="M146.6 581.8c2.2-.6 4.2.2 4.6 2.6v2.6M146.6 584.4c1.2-.2 2.2.3 2.4 1.4v1.2M148.6 579.2c3.2-.6 5.3.6 5.7 3.6v4.2" fill="none" stroke="#2a5a12" stroke-width="0.9"/>
<text x="157.8" y="586.6" font-family="Liberation Sans" font-size="10.4" fill="#ececec" stroke="#ececec" stroke-width="0.3" letter-spacing="-0.4">Progress</text>
<text x="157.8" y="598.8" font-family="Liberation Sans" font-size="9.8" fill="#c8c8c8" letter-spacing="-0.45">Kendo UI for Angular</text>
<text x="157.8" y="618.3" font-family="Liberation Serif" font-size="12.6" fill="#e0e0e0" stroke="#e0e0e0" stroke-width="0.12">Build Better</text>
<text x="157.8" y="632.5" font-family="Liberation Serif" font-size="12.6" fill="#e0e0e0" stroke="#e0e0e0" stroke-width="0.12" letter-spacing="0.3">Angular Apps</text>
<text x="157.8" y="645.3" font-family="Liberation Serif" font-size="12.6" fill="#e0e0e0" stroke="#e0e0e0" stroke-width="0.12">Faster</text>
<path d="M216.8 578.4L295.4 602" stroke="#c8c8c8" stroke-width="3.2" stroke-linecap="round"/>
<path d="M216.8 578.4l3.6 1.1M243 586l3.4 1" stroke="#c0283a" stroke-width="3.3"/>
<path d="M244 671h40l6 9h-50z" fill="#4f4f4f"/>
<path d="M212 680l14-12 12 3-6 9z" fill="#474747"/>
<path d="M281 620l8 3-10 14-7-3z" fill="#5a5a5a"/>
<path d="M280 598l11-2 5 21-10 4z" fill="#c0283a"/>
<circle cx="283.2" cy="596.7" r="3.4" fill="#a8a8a8"/>
<path d="M243 634l6 4-12 14-6-4z" fill="#5a5a5a"/>
<path d="M236.6 655h49l-1.5 14c-2.5 2.5-5.5 2.5-8 0-2.5 2.5-5.5 2.5-8 0-2.5 2.5-5.5 2.5-8 0-2.5 2.5-5.5 2.5-8 0-2.5 2.5-5.5 2.5-8 0z" fill="#c0283a"/>
<path d="M242 637h37.4v18.5H242z" fill="#141414"/>
<path d="M242 641.5h37.4M242 646h37.4M242 650.5h37.4" stroke="#6a6a6a" stroke-width="1.3"/>
<path d="M238.5 628c6-2.5 12-2 17.5 1l-1 8c-5 1.5-10 1-14.5-1.5z" fill="#c0283a"/>
<path d="M265.5 628.5c6-2.5 13-1.5 18.5 2.5l1 9c-6 1.2-12 .8-17.5-1.5z" fill="#c0283a"/>
<ellipse cx="261" cy="615" rx="11" ry="13.8" fill="#cfcfcf" stroke="#3a3a3a" stroke-width="1.6"/>
<path d="M253 607.5h16M252 611.5h18M251.5 615.5h19M252 619.5h18M253 623.5h16" stroke="#3a3a3a" stroke-width="1.1"/>
<path d="M261 602.5v25" stroke="#3a3a3a" stroke-width="1.1"/>
<path d="M256.5 641.2l5.2 1.9-.8 7-4.4 2.5-4.4-2.5-.8-7z" fill="#c0283a" stroke="#e8e8e8" stroke-width="0.5"/>
<path d="M254.2 649.2l2.3-5.8 2.3 5.8M254.9 647.4h3.2" fill="none" stroke="#fff" stroke-width="1"/>
<path d="M214 652l20-11 6 9-20 12z" fill="#c0283a"/>
<path d="M206 643.3L239.7 676.9" stroke="#b0b0b0" stroke-width="3.2" stroke-linecap="round"/>
<circle cx="223" cy="660" r="3.4" fill="#9a9a9a"/>
</svg>
<div id="edit" class="a"></div>
<div id="etabs" class="a"></div>
<div id="atab" class="a"></div>
<svg style="left:269px;top:104px" width="11" height="12" viewBox="0 0 11 12"><path d="M5.5 0L11 2l-.9 7.2L5.5 12 .9 9.2 0 2z" fill="#3f87cc"/><path d="M5.5 2.2L2.9 8.6h1.1l.6-1.5h1.8l.6 1.5h1.1zM4.9 6.1l.6-1.7.6 1.7z" fill="#123a66"/></svg>
<div class="ht" style="left:283.5px;top:104.4px;font-size:10.4px;font-style:italic;color:#f0f0f0;letter-spacing:-0.4px;-webkit-text-stroke:0.2px">app.component.ts</div>
<svg style="left:366.5px;top:107.5px" width="7.5" height="7.5" viewBox="0 0 8 8"><path d="M1 1l6 6M7 1L1 7" stroke="#f0f0f0" stroke-width="1.6"/></svg>
<svg style="left:722.3px;top:104.3px" width="10" height="10.5" viewBox="0 0 10 10.5"><path d="M0 0h9v1.3H0zM0 2.3h6.5v1.3H0zM0 4.6h9.5v1.3H0zM0 6.9h6.5v1.3H0zM0 9.2h9.5v1.3H0z" fill="#c4c4c4"/></svg>
<svg style="left:749px;top:104.5px" width="12" height="10.5" viewBox="0 0 12 10.5"><path d="M0 0h12v10.5H0zM1.3 2v7.2h3.9V2zM6.8 2v7.2h3.9V2z" fill="#c4c4c4" fill-rule="evenodd"/></svg>
<svg style="left:776px;top:106px" width="12" height="4" viewBox="0 0 12 4"><circle cx="1.6" cy="2" r="1.4" fill="#d0d0d0"/><circle cx="6" cy="2" r="1.4" fill="#d0d0d0"/><circle cx="10.4" cy="2" r="1.4" fill="#d0d0d0"/></svg>
<div class="a" style="left:263px;top:126px;width:521px;height:13.6px;background:#1f1f1f;border-top:1px solid #2a2a2a;border-bottom:1px solid #2a2a2a"></div>
<div class="a" style="left:784px;top:125px;width:12px;height:245px;background:#454545"></div>
<div class="cl" style="top:127.3px"><span class="ln" style="color:#c6c6c6">1</span><span class="cd"><span class="k">import</span> { <span class="v">Component</span> } <span class="k">from</span> <span class="s">'@angular/core'</span>;</span></div>
<div class="cl" style="top:141.7px"><span class="ln">2</span><span class="cd"></span></div>
<div class="cl" style="top:156.1px"><span class="ln">3</span><span class="cd">@<span class="t">Component</span>({</span></div>
<div class="cl" style="top:170.5px"><span class="ln">4</span><span class="cd">  <span class="v">selector</span>: <span class="s">'my-app'</span>,</span></div>
<div class="cl" style="top:184.9px"><span class="ln">5</span><span class="cd">  <span class="v">template</span>: <span class="s">`</span></span></div>
<div class="cl" style="top:199.3px"><span class="ln">6</span><span class="cd"><span class="s">  &lt;div class="container"&gt;</span></span></div>
<div class="cl" style="top:213.7px"><span class="ln">7</span><span class="cd"><span class="s">    &lt;a routerLinkActive="active"</span></span></div>
<div class="cl" style="top:228.1px"><span class="ln">8</span><span class="cd"><span class="s">       routerLink="/login"&gt;Login&lt;/a&gt; |</span></span></div>
<div class="cl" style="top:242.5px"><span class="ln">9</span><span class="cd"></span></div>
<div class="cl" style="top:256.9px"><span class="ln">10</span><span class="cd"><span class="s">    &lt;a routerLinkActive="active"</span></span></div>
<div class="cl" style="top:271.3px"><span class="ln">11</span><span class="cd"><span class="s">       routerLink="/home"&gt;Home&lt;/a&gt; |</span></span></div>
<div class="cl" style="top:285.7px"><span class="ln">12</span><span class="cd"></span></div>
<div class="cl" style="top:300.1px"><span class="ln">13</span><span class="cd"><span class="s">    &lt;a routerLinkActive="active"</span></span></div>
<div class="cl" style="top:314.5px"><span class="ln">14</span><span class="cd"><span class="s">      routerLink="/catalog"&gt;Catalog&lt;/a&gt;</span></span></div>
<div class="cl" style="top:328.9px"><span class="ln">15</span><span class="cd"></span></div>
<div class="cl" style="top:343.3px"><span class="ln">16</span><span class="cd"><span class="s">    &lt;router-outlet&gt;&lt;/router-outlet&gt;</span></span></div>
<div class="cl" style="top:357.7px"><span class="ln">17</span><span class="cd"><span class="s">  &lt;/div&gt;</span></span></div>
<div class="cl" style="top:372.1px"><span class="ln">18</span><span class="cd"></span></div>
<div class="cl" style="top:386.5px"><span class="ln">19</span><span class="cd"><span class="s">&lt;app-search-list (selectedList)="selectedGroupData(</span><span class="r">$</span><span class="s">event)" [lists] =</span></span></div>
<div class="cl" style="top:400.9px"><span class="cd"><span class="s">"groupList"&gt;&lt;/app-search-list&gt;</span></span></div>
<div class="cl" style="top:415.3px"><span class="ln">20</span><span class="cd"><span class="s">  `</span>,</span></div>
<div class="cl" style="top:429.7px"><span class="ln">21</span><span class="cd">  <span class="v">styleUrls</span>: [ <span class="s">'./app.component.css'</span> ]</span></div>
<div class="cl" style="top:444.1px"><span class="ln">22</span><span class="cd">})</span></div>
<div class="cl" style="top:458.5px"><span class="ln">23</span><span class="cd"><span class="k">export</span> <span class="b">class</span> <span class="v">AppComponent</span>  {</span></div>
<div class="cl" style="top:472.9px"><span class="ln">24</span><span class="cd">    <span class="v">groupList</span> =[</span></div>
<div class="cl" style="top:487.3px"><span class="ln">25</span><span class="cd">      { <span class="v">name</span>:<span class="s">'Group1'</span>, <span class="v">id</span>: <span class="n">1</span> },</span></div>
<div class="cl" style="top:501.7px"><span class="ln">26</span><span class="cd">      { <span class="v">name</span>:<span class="s">' Group2'</span>, <span class="v">id</span>: <span class="n">2</span> },</span></div>
<div class="cl" style="top:516.1px"><span class="ln">27</span><span class="cd">      { <span class="v">name</span>:<span class="s">' Group3'</span>, <span class="v">id</span>: <span class="n">3</span> },</span></div>
<div class="cl" style="top:530.5px"><span class="ln">28</span><span class="cd">      { <span class="v">name</span>:<span class="s">' Group4'</span>, <span class="v">id</span>: <span class="n">4</span> },</span></div>
<div class="cl" style="top:544.9px"><span class="ln">29</span><span class="cd">      { <span class="v">name</span>:<span class="s">' Group5'</span>, <span class="v">id</span>: <span class="n">5</span> }</span></div>
<div class="cl" style="top:559.3px"><span class="ln">30</span><span class="cd">    ];</span></div>
<div class="cl" style="top:573.7px"><span class="ln">31</span><span class="cd">    <span class="f">selectedGroupData</span>(<span class="e">event</span>) {</span></div>
<div class="cl" style="top:588.1px"><span class="ln">32</span><span class="cd">        <span class="t">console</span>.<span class="v">log</span>(<span class="s">'selected list component says'</span>, <span class="e">event</span>)</span></div>
<div class="cl" style="top:602.5px"><span class="ln">33</span><span class="cd">    }</span></div>
<div class="cl" style="top:616.9px"><span class="ln">34</span><span class="cd">}</span></div>
<div class="cl" style="top:631.3px"><span class="ln">35</span><span class="cd"></span></div>
<div class="cl" style="top:645.7px"><span class="ln">36</span><span class="cd"><span class="c">/**</span></span></div>
<div class="cl" style="top:660.1px"><span class="ln">37</span><span class="cd"><span class="c"> * EXERCISE 1</span></span></div>
<div class="cl" style="top:674.5px"><span class="ln">38</span><span class="cd"><span class="c"> * Duration: 5/10 mins</span></span></div>
<div class="g" style="left:327.0px;top:170.5px;height:216.0px"></div>
<div class="g" style="left:327.0px;top:415.3px;height:28.8px"></div>
<div class="g" style="left:338.6px;top:213.7px;height:144.0px"></div>
<div class="g" style="left:350.2px;top:228.1px;height:28.8px"></div>
<div class="g" style="left:361.7px;top:228.1px;height:14.4px"></div>
<div class="g" style="left:350.2px;top:271.3px;height:28.8px"></div>
<div class="g" style="left:361.7px;top:271.3px;height:14.4px"></div>
<div class="g" style="left:350.2px;top:314.5px;height:28.8px"></div>
<div class="g" style="left:327.0px;top:472.9px;height:129.6px"></div>
<div class="g" style="left:338.6px;top:472.9px;height:129.6px"></div>
<div class="g" style="left:350.2px;top:487.3px;height:57.6px"></div>
<div class="g" style="left:350.2px;top:588.1px;height:14.4px"></div>
<div class="g" style="left:361.7px;top:588.1px;height:14.4px"></div>
<div class="g" style="left:327.0px;top:660.1px;height:28.8px"></div>
<svg style="left:574px;top:265px" width="6" height="13" viewBox="0 0 6 13"><path d="M0.5 0.6h5M3 0.6v11.8M0.5 12.4h5" stroke="#111" stroke-width="2.2"/><path d="M0.5 0.6h5M3 0.6v11.8M0.5 12.4h5" stroke="#e8e8e8" stroke-width="1"/></svg>
<div id="prev" class="a"></div>
<div class="a" style="left:796.5px;top:94.5px;width:356px;height:32.5px;background:#f2f2f2;border-bottom:1px solid #d2d2d2"></div>
<svg style="left:806.5px;top:104.5px" width="12" height="11" viewBox="0 0 12 11"><path d="M11.5 5.5H1M5.5 1L1 5.5 5.5 10" fill="none" stroke="#c8c8c8" stroke-width="1.3"/></svg>
<svg style="left:830px;top:104.5px" width="12" height="11" viewBox="0 0 12 11"><path d="M0.5 5.5H11M6.5 1L11 5.5 6.5 10" fill="none" stroke="#c8c8c8" stroke-width="1.3"/></svg>
<svg style="left:855.5px;top:104.5px" width="10" height="10" viewBox="0 0 10 10"><path d="M0.7 0.7l8.6 8.6M9.3 0.7l-8.6 8.6" stroke="#555" stroke-width="1.5"/></svg>
<div class="a" style="left:877px;top:101px;width:270px;height:20px;background:#fff;border-radius:3px;border:1px solid #e0e0e0"></div>
<svg style="left:883px;top:105px" width="9" height="11" viewBox="0 0 9 11"><rect x="0" y="4.5" width="9" height="6.5" rx="0.8" fill="#2e8540"/><path d="M2 4.6V3a2.5 2.5 0 0 1 5 0v1.6" fill="none" stroke="#2e8540" stroke-width="1.5"/></svg>
<div class="ht" style="left:897.7px;top:104.5px;font-size:12px;color:#202020"><span style="color:#3f8f50">https://</span>wmaiwxrl.github.stackblitz.io</div>
<svg style="left:896px;top:201px" width="80" height="106" viewBox="960 201 80 106">
<circle cx="1038.5" cy="207" r="2.5" fill="#cdb09e"/>
<circle cx="1038.5" cy="303" r="2.6" fill="#7f93d6"/>
<circle cx="1038.5" cy="255" r="25.4" fill="none" stroke="#c9d0a2" stroke-width="2.2"/>
<path d="M1011.52 230.71A36.3 36.3 0 0 1 1057.74 224.22" fill="none" stroke="#cbcbcb" stroke-width="3.6"/>
<path d="M1057.74 224.22A36.3 36.3 0 0 1 1063.72 281.11" fill="none" stroke="#a6bcd2" stroke-width="3.6"/>
<path d="M1063.72 281.11A36.3 36.3 0 0 1 1011.52 230.71" fill="none" stroke="#927f99" stroke-width="3.6"/>
<path d="M1042.5 243.5L1030 257.5h7l-3.2 11 12.5-14.5h-7z" fill="#666"/>
</svg>
<div class="ht" style="left:856px;top:349px;width:237px;text-align:center;font-size:12px;font-weight:bold;color:#6b6b6b">Starting dev server</div>
<div class="a" style="left:796.5px;top:658px;width:356px;height:22px;background:#efefef;border-top:1px solid #d4d4d4"></div>
<div class="ht" style="left:805px;top:665px;font-size:10.2px;color:#6a6a6a">Console</div>
<svg style="left:1134px;top:666px" width="10" height="6" viewBox="0 0 10 6"><path d="M0.8 5.4L5 1.2l4.2 4.2" fill="none" stroke="#555" stroke-width="1.3"/></svg>
<div class="a" style="left:0;top:680.5px;width:1152px;height:40px;background:#fff;border-top:1px solid #e8e8e8"></div>
<svg style="left:16px;top:693px" width="12" height="14" viewBox="0 0 12 14"><path d="M0.5 0.5h8l3 3v10h-11z" fill="#f4f4f4" stroke="#cfcfcf" stroke-width="1"/><circle cx="6" cy="8" r="3" fill="#d9a441"/><rect x="5" y="2" width="2" height="4" fill="#8a6d3b"/></svg>
<div class="ht" style="left:39px;top:695.5px;font-size:12px;color:#4a4d51">angular-router-....zip</div>
<svg style="left:160px;top:697px" width="10" height="6" viewBox="0 0 10 6"><path d="M1 5.2L5 1.2l4 4" fill="none" stroke="#5f6368" stroke-width="1.4"/></svg>
<div class="a" style="left:184px;top:688px;width:1px;height:25px;background:#dadce0"></div>
<div class="a" style="left:1057.5px;top:687px;width:65px;height:25.5px;border:1px solid #e8e8e8;border-radius:4px;background:#fff"></div>
<div class="ht" style="left:1057.5px;top:693.5px;width:65px;text-align:center;font-size:10.3px;color:#202124;-webkit-text-stroke:0.2px">Show All</div>
<svg style="left:1133px;top:695px" width="10" height="10" viewBox="0 0 10 10"><path d="M0.7 0.7l8.6 8.6M9.3 0.7l-8.6 8.6" stroke="#5f6368" stroke-width="1.4"/></svg>
</div>
</body></html>
